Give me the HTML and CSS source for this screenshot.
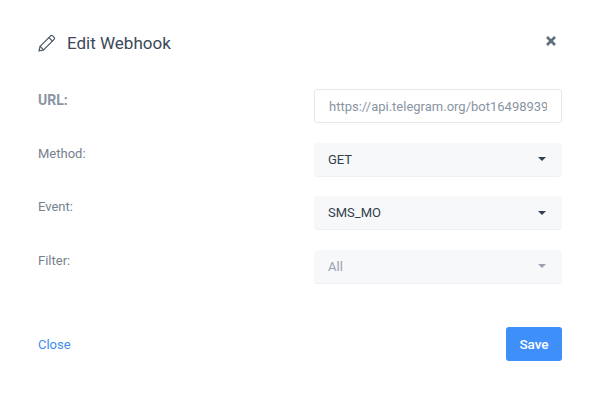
FILE: index.html
```html
<!DOCTYPE html>
<html lang="en">

<head>
  <meta charset="UTF-8">
  <meta name="viewport" content="width=device-width, initial-scale=1.0">
  <link rel="stylesheet" href="styles.css">
  <title>Edit Webhook</title>
</head>

<body>
  <div class="modal">
    <div class="modal-header">
      <svg class="icon-edit" width="18" height="18" viewBox="0 0 18 18" fill="none" stroke="#4a5663" stroke-width="1.2" stroke-linejoin="round" stroke-linecap="round">
        <path d="M1 17l1.1-4.6L12.6 1.9a1.5 1.5 0 0 1 2.1 0l1.4 1.4a1.5 1.5 0 0 1 0 2.1L5.6 15.9z" />
        <path d="M2.1 12.4l3.5 3.5M10.9 3.6l3.5 3.5" />
      </svg>
      <h2 class="modal-title">Edit Webhook</h2>
      <svg class="icon-close" width="10" height="10" viewBox="0 0 10 10" stroke="#5f6c7a" stroke-width="2.6">
        <path d="M1 1l8 8M9 1l-8 8" />
      </svg>
    </div>

    <div class="form-row">
      <label class="label label-strong">URL:</label>
      <div class="input">
        <span class="input-text">https://api.telegram.org/bot164989392</span>
      </div>
    </div>

    <div class="form-row">
      <label class="label">Method:</label>
      <div class="select"><span>GET</span><i class="caret"></i></div>
    </div>

    <div class="form-row">
      <label class="label">Event:</label>
      <div class="select"><span>SMS_MO</span><i class="caret"></i></div>
    </div>

    <div class="form-row">
      <label class="label">Filter:</label>
      <div class="select disabled"><span>All</span><i class="caret"></i></div>
    </div>

    <div class="modal-footer">
      <a class="link-close" href="#">Close</a>
      <button class="btn-save">Save</button>
    </div>
  </div>
</body>

</html>
```

FILE: styles.css
```css
* {
  box-sizing: border-box;
}

body {
  margin: 0;
  background-color: #fff;
  font-family: Roboto, "Liberation Sans", sans-serif;
  font-size: 13px;
}

.modal {
  width: 600px;
  height: 400px;
  padding: 30px 38px 0;
}

.modal-header {
  display: flex;
  align-items: center;
  height: 26px;
  margin-bottom: 33px;
}

.icon-edit {
  margin-right: 11px;
}

.modal-title {
  flex: 1;
  margin: 0;
  font-size: 17px;
  font-weight: 400;
  color: #3c4858;
}

.icon-close {
  margin-right: 6px;
  margin-bottom: 5px;
}

.form-row {
  display: flex;
  justify-content: space-between;
  height: 34px;
  margin-bottom: 19.5px;
}

.label {
  padding-top: 3px;
  line-height: 16px;
  color: #76818f;
}

.label-strong {
  font-size: 14px;
  font-weight: 700;
  color: #8a94a3;
}

.input,
.select {
  width: 248px;
  height: 34px;
  padding: 0 14px;
  display: flex;
  align-items: center;
  border-radius: 3px;
}

.input {
  border: 1px solid #e4e8ec;
  background-color: #fff;
  color: #8a94a3;
}

.input-text {
  display: block;
  width: 100%;
  overflow: hidden;
  white-space: nowrap;
}

.select {
  justify-content: space-between;
  background-color: #f7f8fa;
  border-bottom: 1px solid #eef0f3;
  color: #333f4d;
}

.caret {
  margin-right: 2px;
  border-left: 4px solid transparent;
  border-right: 4px solid transparent;
  border-top: 4px solid #333f4d;
}

.select.disabled {
  color: #98a1ac;
}

.select.disabled .caret {
  border-top-color: #98a1ac;
}

.modal-footer {
  display: flex;
  justify-content: space-between;
  align-items: center;
  margin-top: 43.5px;
}

.link-close {
  color: #3f8ef0;
  text-decoration: none;
}

.btn-save {
  width: 56px;
  height: 34px;
  border: none;
  border-radius: 3px;
  background-color: #3f8ffa;
  color: #fff;
  font-family: inherit;
  font-size: 13.5px;
  font-weight: 500;
}
```
